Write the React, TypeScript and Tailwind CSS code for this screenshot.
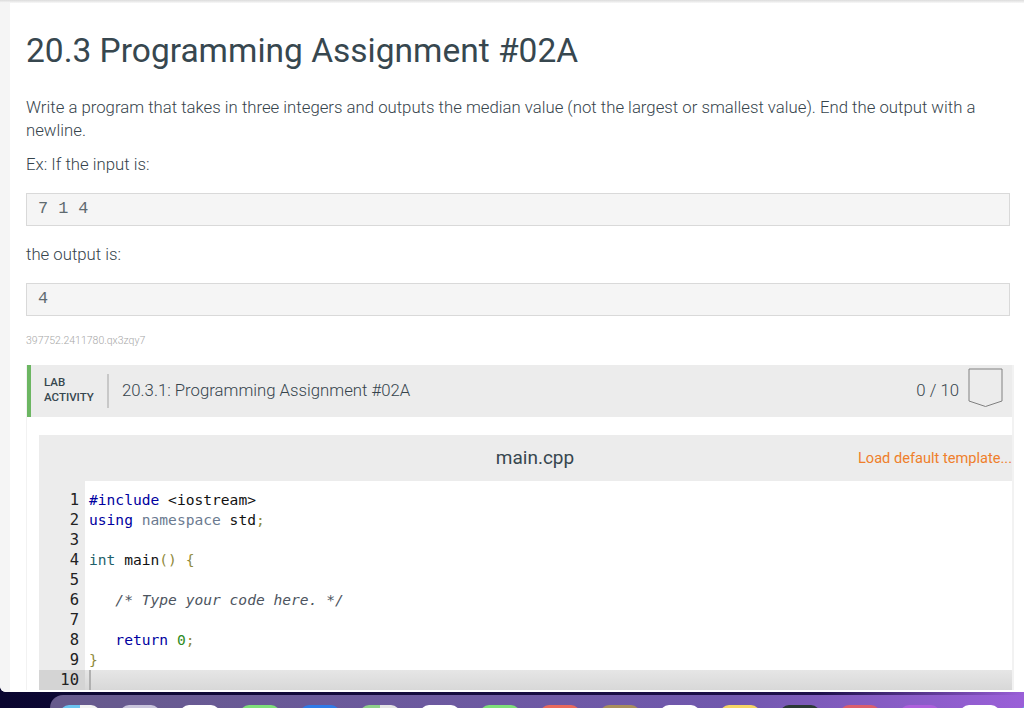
const dockColors = [
  "bg-gradient-to-r from-[#6cc4f0] from-50% to-[#f2f2f2] to-50%", "bg-[#c9c5dc]", "bg-white", "bg-[#7fe07a]", "bg-[#2f7be8]",
  "bg-gradient-to-r from-[#8fd08a] from-50% to-[#e4e4e4] to-50%",
  "bg-white", "bg-[#7fe07a]", "bg-[#ea6a5c]", "bg-[#a98f5c]", "bg-white", "bg-[#f6d665]",
  "bg-[#2b3a36]", "bg-[#dc5f6c]", "bg-[#ad5fdc]", "bg-white", "bg-[#58b4ee]",
];

function Sample({ value }: { value: string }) {
  return (
    <pre className="h-[33px] border border-[#d9d9d9] bg-[#f5f5f5] pl-[11px] font-['Liberation_Mono',monospace] text-[16.8px] leading-[30px] text-[#5f6a70]">
      {value}
    </pre>
  );
}

function Gutter({ n, active }: { n?: number; active?: boolean }) {
  return (
    <div className={`w-[46px] shrink-0 pr-[6px] text-right text-[15.5px] text-[#222] ${active ? "bg-[#d4d4d4]" : "bg-[#ececec]"}`}>
      {n}
    </div>
  );
}

function CodeLine({ n, children }: { n: number; children?: React.ReactNode }) {
  return (
    <div className="flex h-[20px]">
      <Gutter n={n} />
      <div className="whitespace-pre pl-[4px]">{children}</div>
    </div>
  );
}

export default function App() {
  return (
    <div className="flex h-[708px] w-[1024px] flex-col overflow-hidden bg-gradient-to-r from-[#0a0630] via-[#1d0f4a] via-80% to-[#9a5fd8] font-['Roboto',sans-serif]">
      <div className="h-[3px] shrink-0 bg-gradient-to-b from-[#dcdcdc] to-[#f8f8f8]" />
      <div className="flex h-[689px] shrink-0 overflow-hidden rounded-bl-[6px] bg-white">
        <div className="w-[10px] shrink-0 bg-[#f5f5f5]" />
        <main className="w-[1014px] shrink-0 pl-[16px] pt-[29px]">
          <div className="w-[984px]">
            <h1 className="text-[33.5px] leading-[38px] text-[#37474f]">20.3 Programming Assignment #02A</h1>
            <p className="mt-[26px] text-[16.75px] leading-[23px] font-light text-[#36444c]">
              Write a program that takes in three integers and outputs the median value (not the largest or smallest value). End the output with a newline.
            </p>
            <p className="mt-[11px] text-[16.75px] leading-[23px] font-light text-[#36444c]">Ex: If the input is:</p>
            <div className="mt-[17px]">
              <Sample value="7 1 4" />
            </div>
            <p className="mt-[17px] text-[16.75px] leading-[23px] font-light text-[#36444c]">the output is:</p>
            <div className="mt-[17px]">
              <Sample value="4" />
            </div>
            <p className="mt-[18px] text-[10.5px] leading-[14px] font-light text-[#a8a8a8]">397752.2411780.qx3zqy7</p>
          </div>

          <section className="mt-[17px] w-[988px] border-l border-r-2 border-[#f2f2f2]">
            <div className="flex h-[52px] items-center border-l-[4px] border-[#6cb662] bg-[#ececec] pl-[13px] pr-[9px]">
              <div className="mb-[3px] w-[50px] text-[11.5px] leading-[15px] font-medium text-[#37474f]">
                LAB
                <br />
                ACTIVITY
              </div>
              <div className="ml-[13px] h-[34px] w-[2px] bg-[#c8c8c8]" />
              <div className="ml-[13px] flex-1 text-[16.75px] font-light text-[#36444c]">20.3.1: Programming Assignment #02A</div>
              <div className="text-[16.75px] font-light text-[#36444c]">0 / 10</div>
              <svg className="mb-[6px] ml-[9px]" width="35" height="40" viewBox="0 0 35 40" fill="none">
                <path d="M1 1H34V33L17.5 38.5L1 33Z" stroke="#808080" strokeWidth="1" />
              </svg>
            </div>

            <div className="ml-[12px] mt-[18px] w-[973px]">
              <div className="relative flex h-[46px] items-center justify-center bg-[#ececec] text-[19px] text-[#37474f]">
                <span className="ml-[19px]">main.cpp</span>
                <span className="absolute right-0 top-[14px] text-[14.6px] leading-[18px] text-[#ef7f2b]">Load default template...</span>
              </div>
              <div className="font-['DejaVu_Sans_Mono',monospace] text-[14.6px] leading-[20px] text-[#111]">
                <div className="h-[9px] w-[46px] bg-[#ececec]" />
                <CodeLine n={1}>
                  <span className="text-[#0000a0]">#include</span> {"<iostream>"}
                </CodeLine>
                <CodeLine n={2}>
                  <span className="text-[#0000a0]">using</span> <span className="text-[#6b7a90]">namespace</span> std<span className="text-[#8f8a3c]">;</span>
                </CodeLine>
                <CodeLine n={3} />
                <CodeLine n={4}>
                  <span className="text-[#1f5f6b]">int</span> main<span className="text-[#8f8a3c]">()</span> <span className="text-[#8f8a3c]">{"{"}</span>
                </CodeLine>
                <CodeLine n={5} />
                <CodeLine n={6}>
                  <span className="italic text-[#4d5560]">{"   /* Type your code here. */"}</span>
                </CodeLine>
                <CodeLine n={7} />
                <CodeLine n={8}>
                  {"   "}
                  <span className="text-[#0000a0]">return</span> <span className="text-[#2e8b1e]">0</span>
                  <span className="text-[#8f8a3c]">;</span>
                </CodeLine>
                <CodeLine n={9}>
                  <span className="text-[#8f8a3c]">{"}"}</span>
                </CodeLine>
                <div className="flex h-[20px] bg-gradient-to-b from-[#e6e6e6] to-[#d8d8d8]">
                  <Gutter n={10} active />
                  <div className="ml-[4px] h-[20px] w-[2px] bg-[#b0b0b0]" />
                </div>
              </div>
            </div>
          </section>
        </main>
      </div>

      <div className="h-[16px] shrink-0 pt-[3px]">
        <div className="ml-[50px] flex h-[13px] gap-[20px] overflow-hidden rounded-tl-[14px] bg-gradient-to-r from-[#665a8c] via-[#7158ae] via-70% to-[#9a5fd8] pl-[10px] pt-[10px]">
          {dockColors.map((color, i) => (
            <div key={i} className={`h-[40px] w-[40px] shrink-0 rounded-[9px] ${color}`} />
          ))}
        </div>
      </div>
    </div>
  );
}
